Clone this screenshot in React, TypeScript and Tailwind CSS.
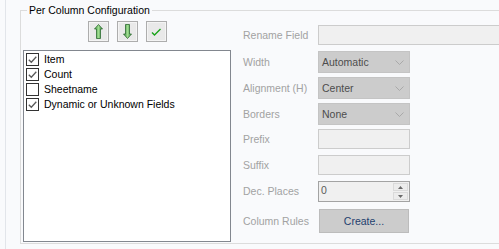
import React from 'react';

const items = [
  { label: 'Item', checked: true },
  { label: 'Count', checked: true },
  { label: 'Sheetname', checked: false },
  { label: 'Dynamic or Unknown Fields', checked: true },
];

function ArrowIcon({ down }: { down?: boolean }) {
  return (
    <svg width="9" height="15" viewBox="0 0 9 15" style={{ transform: down ? 'rotate(180deg)' : undefined }}>
      <defs>
        <linearGradient id={down ? 'gd' : 'gu'} x1="0" y1="0" x2="1" y2="0">
          <stop offset="0" stopColor="#3f9a45" />
          <stop offset="0.5" stopColor="#9fdc8f" />
          <stop offset="1" stopColor="#2f7f36" />
        </linearGradient>
      </defs>
      <path d="M4.5 0.5 L8.5 5 L6.5 5 L6.5 14.5 L2.5 14.5 L2.5 5 L0.5 5 Z" fill={`url(#${down ? 'gd' : 'gu'})`} stroke="#2d6b31" strokeWidth="0.8" strokeLinejoin="round" />
    </svg>
  );
}

function CheckIcon() {
  return (
    <svg width="10" height="8" viewBox="0 0 10 8">
      <path d="M1 4.5 L3.5 7 L9.5 1" fill="none" stroke="#1aa31a" strokeWidth="1.4" />
    </svg>
  );
}

function ToolButton({ children }: { children: React.ReactNode }) {
  return (
    <div className="w-[21px] h-[21px] flex items-center justify-center bg-[#e9e9e9] border border-[#adadad] shadow-[inset_0_0_0_1px_#f4f4f4]">
      {children}
    </div>
  );
}

function CheckBox({ checked }: { checked: boolean }) {
  return (
    <div className="w-[13px] h-[13px] border border-[#333333] bg-white flex items-center justify-center shrink-0">
      {checked && (
        <svg width="9" height="8" viewBox="0 0 9 8">
          <path d="M0.8 3.8 L3.3 6.3 L8.3 0.8" fill="none" stroke="#5a5a5a" strokeWidth="1.3" />
        </svg>
      )}
    </div>
  );
}

function Label({ children }: { children: React.ReactNode }) {
  return <div className="w-[75px] shrink-0 text-[#a2a2a2]">{children}</div>;
}

function Combo({ value }: { value: string }) {
  return (
    <div className="w-[92px] h-[22px] bg-[#cccccc] border border-[#c4c4c4] flex items-center pl-[3px] pr-[5px] text-[#4d4d4d]">
      <span className="flex-1">{value}</span>
      <svg width="9" height="5" viewBox="0 0 9 5">
        <path d="M0.5 0.5 L4.5 4.5 L8.5 0.5" fill="none" stroke="#a9a9a9" strokeWidth="1" />
      </svg>
    </div>
  );
}

export default function App() {
  return (
    <div className="w-[499px] h-[249px] overflow-hidden bg-[#f9fafc] pl-[5px] text-[10.5px] leading-none" style={{ fontFamily: '"Liberation Sans", Arial, sans-serif' }}>
      <div className="h-full border-l border-[#e2e5ea] pl-[14px] pt-[10px]">
        <div className="relative w-[600px] h-[234px] border-t border-l border-b border-[#dcdcdc]">
          <div className="absolute left-[6px] top-[-7px] px-[2px] bg-[#f9fafc] text-black leading-[13px]">
            Per Column Configuration
          </div>
          <div className="flex pl-[2px] pt-[10px]">
            {/* left column */}
            <div className="w-[208px] flex flex-col items-center">
              <div className="flex gap-[8px]">
                <ToolButton><ArrowIcon /></ToolButton>
                <ToolButton><ArrowIcon down /></ToolButton>
                <ToolButton><CheckIcon /></ToolButton>
              </div>
              <div className="mt-[8px] w-full h-[192px] bg-white border border-[#82878f] pt-[1px] pl-[2px]">
                {items.map((it) => (
                  <div key={it.label} className="h-[15px] flex items-center gap-[5px] text-black">
                    <CheckBox checked={it.checked} />
                    <span>{it.label}</span>
                  </div>
                ))}
              </div>
            </div>

            {/* right column */}
            <div className="ml-[12px] pt-[4px] flex flex-col">
              <div className="flex items-center h-[20px]">
                <Label>Rename Field</Label>
                <div className="w-[200px] h-[20px] bg-[#f0f0f0] border border-[#cccccc]" />
              </div>
              <div className="flex items-center mt-[6px]">
                <Label>Width</Label>
                <Combo value="Automatic" />
              </div>
              <div className="flex items-center mt-[4px]">
                <Label>Alignment (H)</Label>
                <Combo value="Center" />
              </div>
              <div className="flex items-center mt-[4px]">
                <Label>Borders</Label>
                <Combo value="None" />
              </div>
              <div className="flex items-center mt-[4px]">
                <Label>Prefix</Label>
                <div className="w-[92px] h-[20px] bg-[#f0f0f0] border border-[#cccccc]" />
              </div>
              <div className="flex items-center mt-[6px]">
                <Label>Suffix</Label>
                <div className="w-[92px] h-[20px] bg-[#f0f0f0] border border-[#cccccc]" />
              </div>
              <div className="flex items-center mt-[6px]">
                <Label>Dec. Places</Label>
                <div className="w-[92px] h-[21px] bg-[#f0f0f0] border border-[#a3a3a3] flex items-stretch">
                  <span className="flex-1 pl-[2px] pt-[3px] text-[#5a5a5a]">0</span>
                  <div className="w-[15px] my-[1px] mr-[1px] flex flex-col gap-[1px]">
                    <div className="flex-1 bg-[#ececec] border border-[#dadada] flex items-center justify-center">
                      <svg width="5" height="3" viewBox="0 0 5 3"><path d="M0 3 L2.5 0 L5 3 Z" fill="#6a6a6a" /></svg>
                    </div>
                    <div className="flex-1 bg-[#ececec] border border-[#dadada] flex items-center justify-center">
                      <svg width="5" height="3" viewBox="0 0 5 3"><path d="M0 0 L2.5 3 L5 0 Z" fill="#6a6a6a" /></svg>
                    </div>
                  </div>
                </div>
              </div>
              <div className="flex items-center mt-[7px]">
                <Label>Column Rules</Label>
                <div className="ml-[1px] w-[90px] h-[24px] bg-[#cccccc] border border-[#bcbcbc] flex items-center justify-center text-[#23406e]">
                  Create...
                </div>
              </div>
            </div>
          </div>
        </div>
      </div>
    </div>
  );
}
